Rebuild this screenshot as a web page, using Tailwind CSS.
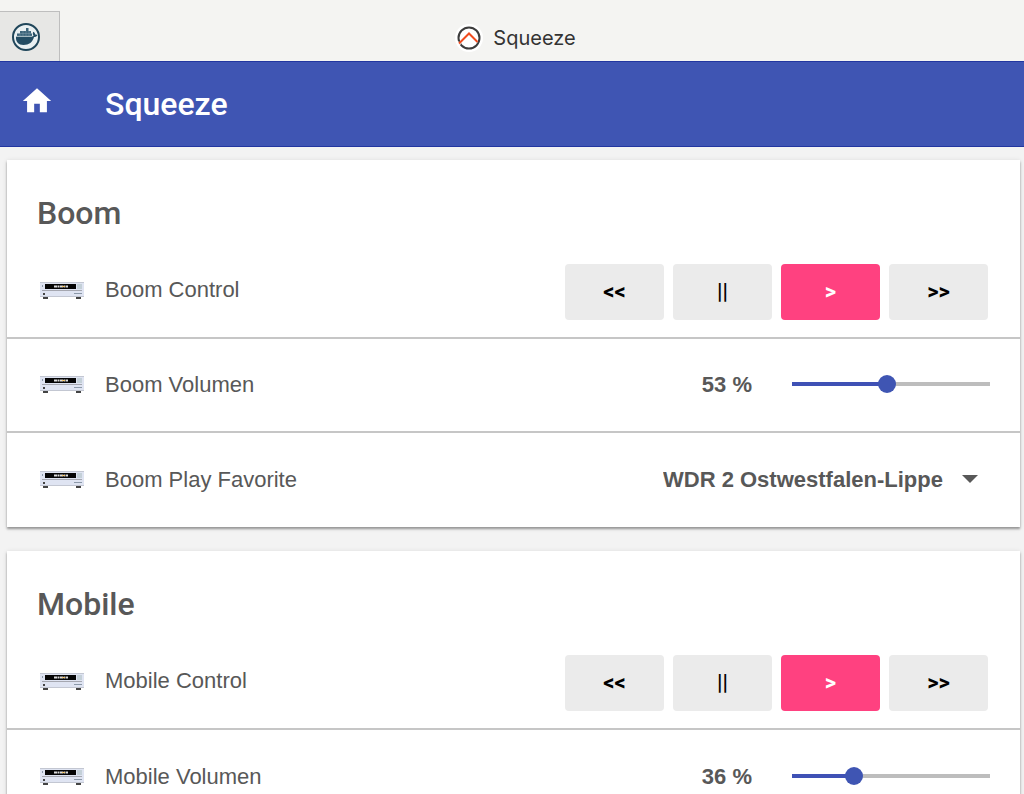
<!DOCTYPE html>
<html lang="en">

<head>
    <meta charset="UTF-8">
    <meta name="viewport" content="width=device-width, initial-scale=1">
    <title>Squeeze</title>
    <script src="https://cdn.jsdelivr.net/npm/@tailwindcss/browser@4"></script>
    <style>
        .slider {
            appearance: none;
            height: 18px;
            background: linear-gradient(to right, #3f51b5 var(--fill), #bdbdbd var(--fill)) center / 100% 4px no-repeat;
        }

        .slider::-webkit-slider-thumb {
            appearance: none;
            width: 18px;
            height: 18px;
            border-radius: 50%;
            background: #3f55b3;
        }
    </style>
</head>

<body class="h-screen overflow-hidden bg-[#f3f3f3] font-['Liberation_Sans',sans-serif] text-[22px] text-[#585858]">

    <!-- Device icon shared by all rows -->
    <svg class="hidden" xmlns="http://www.w3.org/2000/svg">
        <symbol id="receiver" viewBox="0 0 46 20">
            <path fill="#444" d="M4 17h5v2H4zM37 17h5v2h-5z" />
            <path fill="#dfe4f2" d="M1 2h44v15H1z" />
            <path fill="#c3c7d2" d="M1 2h44v1H1zM1 16h44v1H1z" />
            <path fill="#a5a7b0" d="M3 10h40v1H3z" />
            <path fill="#050505" d="M6 4h31v5H6z" />
            <path fill="none" stroke="#ddd" stroke-width="2" stroke-dasharray="3 .5 2 .5" d="M15 6.500h14" />
            <path fill="#f3c66d" d="M23 6h3v1h-3z" />
            <path fill="#c4d0d8" d="M38 4h5v5h-5z" />
            <path fill="#444" d="M4 13h2v2H4z" />
            <path fill="#8b98a8" d="M35 13h8v1h-8zM3 5h1v2H3z" />
        </symbol>
    </svg>

    <!-- Browser tabs -->
    <nav class="flex h-[61px] items-end bg-[#f4f4f2] text-xl text-[#333]">
        <a href="#" aria-label="Docker" class="flex h-[50px] w-15 items-center border-t border-r border-[#bebebe] bg-[#e7e7e5] pl-3">
            <svg class="size-7" viewBox="0 0 28 28">
                <circle cx="14" cy="14" r="13" fill="#e9f0f2" stroke="#20465a" stroke-width="2" />
                <path fill="#234c63"
                    d="M4 13.500h15.500c1 0 1.700-.4 2-1-.9-1.200-.9-2.700-.2-3.800 1.200.7 1.900 1.700 2 2.800 1-.2 1.500 0 2.200.5-.6 1.500-1.900 2-3.500 2C20.800 19 17 22 11.500 22 6.500 22 3.500 19 4 13.500z" />
                <path fill="#3c647a" d="M5 10.500h15V13H5zM8 8h11v2.500H8zM14 5h2.500v3H14z" />
                <path fill="none" stroke="#8ca5b1" stroke-width=".4" d="M5 10.500h15M8 10.500V13M11 8v5M14 8v5M17 8v5" />
                <path stroke="#e9f0f2" stroke-width=".4" d="M4 13.300h16" />
            </svg>
        </a>
        <a href="#" class="flex h-[50px] flex-1 items-center justify-center gap-2.5 pt-1 pr-[53px]">
            <svg class="size-7" viewBox="0 0 28 28">
                <circle cx="14" cy="14" r="14" fill="#fff" />
                <circle cx="14" cy="14" r="10.500" fill="none" stroke="#3c3c3c" stroke-width="2" />
                <path fill="none" stroke="#fff" stroke-width="2" d="M3 18l2.500 2.500" />
                <path fill="none" stroke="#f04b1e" stroke-width="2" d="M4 19.500L14 9.500l8.500 8.500" />
            </svg>
            <span class="font-['Inter',sans-serif]">Squeeze</span>
        </a>
    </nav>

    <!-- App bar -->
    <header class="flex h-[86px] items-center border-y border-[#2236a0] bg-[#3f55b3] pl-5 text-white">
        <a href="#" aria-label="Home" class="w-[85px] pb-1.5">
            <svg class="size-[34px]" viewBox="0 0 24 24" fill="currentColor">
                <path d="M10 20v-6h4v6h5v-8h3L12 3 2 12h3v8z" />
            </svg>
        </a>
        <h1 class="font-['Roboto',sans-serif] text-[32px] font-medium">Squeeze</h1>
    </header>

    <main class="flex flex-col gap-6 pt-[13px] pr-1 pl-[7px]">

        <!-- Boom -->
        <section class="divide-y-2 divide-[#c6c6c6] bg-white shadow-[0_2px_2px_#999,0_1px_5px_#0002]">
            <div>
                <h2 class="px-[30px] pt-8 pb-2 font-['Roboto',sans-serif] text-[32px] leading-[42px] font-medium">Boom</h2>
                <div class="flex h-[95px] items-center px-8">
                    <svg class="mr-5 h-5 w-[46px]"><use href="#receiver" /></svg>
                    <span class="flex-1">Boom Control</span>
                    <div class="flex gap-[9px] pt-1 font-['Roboto',sans-serif] font-bold text-black">
                        <button class="h-14 w-[99px] rounded-sm bg-[#ebebeb]">&lt;&lt;</button>
                        <button class="h-14 w-[99px] rounded-sm bg-[#ebebeb] font-medium">||</button>
                        <button class="h-14 w-[99px] rounded-sm bg-[#ff4180] text-white">&gt;</button>
                        <button class="h-14 w-[99px] rounded-sm bg-[#ebebeb]">&gt;&gt;</button>
                    </div>
                </div>
            </div>
            <div class="flex h-[94px] items-center pr-[30px] pb-0.5 pl-8">
                <svg class="mr-5 h-5 w-[46px]"><use href="#receiver" /></svg>
                <label for="boom-volume" class="flex-1">Boom Volumen</label>
                <output for="boom-volume" class="mr-10 font-bold">53 %</output>
                <input id="boom-volume" type="range" min="9" max="101" value="53" class="slider w-[198px]" style="--fill: 48%">
            </div>
            <div class="flex h-[94px] items-center px-8 pb-0.5">
                <svg class="mr-5 h-5 w-[46px]"><use href="#receiver" /></svg>
                <label for="boom-favorite" class="flex-1">Boom Play Favorite</label>
                <div class="relative">
                    <select id="boom-favorite" class="appearance-none pr-[45px] font-bold">
                        <option>WDR 2 Ostwestfalen-Lippe</option>
                    </select>
                    <svg class="pointer-events-none absolute top-1/2 right-2.5 h-2 w-4 -translate-y-1/2" viewBox="0 0 16 8" fill="currentColor">
                        <path d="M0 0h16L8 8z" />
                    </svg>
                </div>
            </div>
        </section>

        <!-- Mobile -->
        <section class="divide-y-2 divide-[#c6c6c6] bg-white shadow-[0_2px_2px_#999,0_1px_5px_#0002]">
            <div>
                <h2 class="px-[30px] pt-8 pb-2 font-['Roboto',sans-serif] text-[32px] leading-[42px] font-medium">Mobile</h2>
                <div class="flex h-[95px] items-center px-8">
                    <svg class="mr-5 h-5 w-[46px]"><use href="#receiver" /></svg>
                    <span class="flex-1">Mobile Control</span>
                    <div class="flex gap-[9px] pt-1 font-['Roboto',sans-serif] font-bold text-black">
                        <button class="h-14 w-[99px] rounded-sm bg-[#ebebeb]">&lt;&lt;</button>
                        <button class="h-14 w-[99px] rounded-sm bg-[#ebebeb] font-medium">||</button>
                        <button class="h-14 w-[99px] rounded-sm bg-[#ff4180] text-white">&gt;</button>
                        <button class="h-14 w-[99px] rounded-sm bg-[#ebebeb]">&gt;&gt;</button>
                    </div>
                </div>
            </div>
            <div class="flex h-[94px] items-center pr-[30px] pb-0.5 pl-8">
                <svg class="mr-5 h-5 w-[46px]"><use href="#receiver" /></svg>
                <label for="mobile-volume" class="flex-1">Mobile Volumen</label>
                <output for="mobile-volume" class="mr-10 font-bold">36 %</output>
                <input id="mobile-volume" type="range" min="9" max="101" value="36" class="slider w-[198px]" style="--fill: 31%">
            </div>
        </section>

    </main>

    <script>
        // Keep the percentage and the filled track in step with the slider
        document.querySelectorAll('.slider').forEach((slider) => {
            slider.addEventListener('input', () => {
                const fill = (slider.value - slider.min) / (slider.max - slider.min) * 100;
                slider.style.setProperty('--fill', fill + '%');
                slider.previousElementSibling.textContent = slider.value + ' %';
            });
        });
    </script>

</body>

</html>
